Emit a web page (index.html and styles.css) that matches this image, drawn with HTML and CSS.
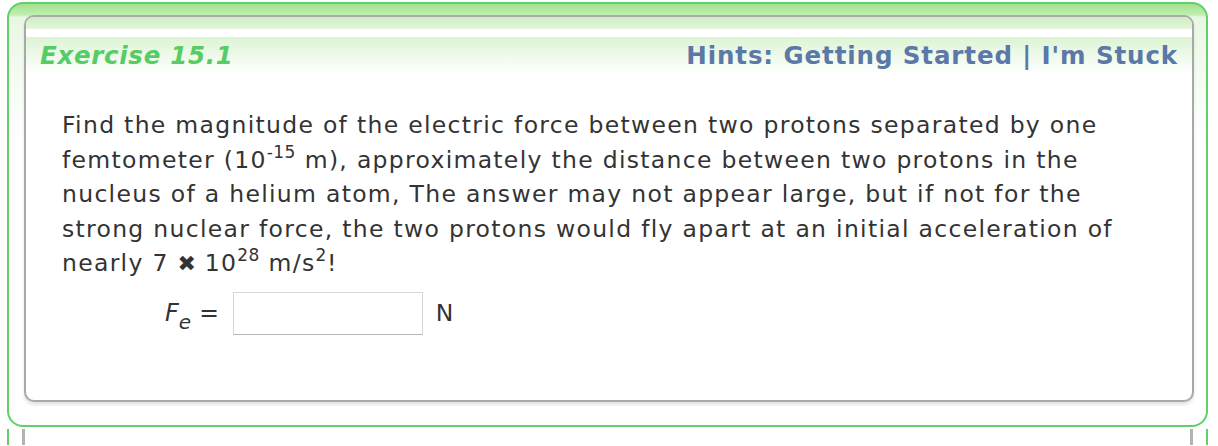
FILE: index.html
```html
<!DOCTYPE html>
<html>
<head>
<meta charset="utf-8">
<link rel="stylesheet" href="styles.css">
</head>
<body>
<div class="frame">
  <div class="box">
    <div class="topband"></div>
    <div class="gap"></div>
    <div class="header">
      <span class="title">Exercise 15.1</span>
      <span class="hints">Hints: Getting Started | I'm Stuck</span>
    </div>
    <div class="content">
      <p class="problem">Find the magnitude of the electric force between two protons separated by one femtometer (10<sup>-15</sup> m), approximately the distance between two protons in the nucleus of a helium atom, The answer may not appear large, but if not for the strong nuclear force, the two protons would fly apart at an initial acceleration of nearly 7 <span class="times">&#x2716;</span> 10<sup>28</sup> m/s<sup>2</sup>!</p>
      <div class="answer">
        <span class="var"><i>F</i><sub><i>e</i></sub></span>
        <span class="eq">=</span>
        <span class="input"></span>
        <span class="unit">N</span>
      </div>
    </div>
  </div>
</div>
<div class="next"><div class="next-inner"></div></div>
</body>
</html>
```
FILE: styles.css
```css
html, body {
  margin: 0;
  padding: 0;
  background: #ffffff;
}
body {
  width: 1218px;
  height: 446px;
  overflow: hidden;
  font-family: "DejaVu Sans", Verdana, sans-serif;
}
.frame {
  margin: 2px 10px 0 7px;
  height: 410px;
  border: 2px solid #5fd06a;
  border-radius: 16px;
  background: linear-gradient(to bottom, #a2e08f 0px, #c2eeb2 11px, #e8f7e2 13px, #f6fcf4 80px, #ffffff 140px);
  padding: 11px 12px 0 15px;
  box-sizing: content-box;
}
.box {
  height: 383px;
  border: 2px solid #a9a9a9;
  border-radius: 10px;
  background: #ffffff;
  box-shadow: 0 3px 3px rgba(0, 0, 0, 0.10);
  overflow: hidden;
}
.topband {
  height: 12px;
  background: linear-gradient(to bottom, #cdeec1, #e4f6dc);
}
.gap {
  height: 8px;
  background: #ffffff;
}
.header {
  height: 36px;
  display: flex;
  align-items: center;
  justify-content: space-between;
  padding: 0 14px 0 14px;
  background: linear-gradient(to bottom, #dcf4d3, #ffffff);
}
.title {
  color: #55cc64;
  font-weight: bold;
  font-style: italic;
  font-size: 24.5px;
  letter-spacing: 0.7px;
  padding-top: 1px;
}
.hints {
  color: #5b78a8;
  font-weight: bold;
  font-size: 24.5px;
  letter-spacing: 0.9px;
  padding-top: 1px;
}
.content {
  padding: 35px 36px 0 36px;
  color: #333333;
}
.problem {
  margin: 0;
  font-size: 23.5px;
  letter-spacing: 1.3px;
  line-height: 34.5px;
}
.problem sup {
  font-size: 17px;
  line-height: 0;
  vertical-align: 10px;
  letter-spacing: 0.5px;
}
.times {
  font-size: 22px;
  letter-spacing: 0;
}
.answer {
  display: flex;
  align-items: center;
  margin-top: 10px;
  padding-left: 103px;
  font-size: 23.5px;
  color: #333333;
}
.var {
  font-size: 24px;
}
.var sub {
  font-size: 20px;
  vertical-align: -8px;
  line-height: 0;
}
.eq {
  margin-left: 8px;
}
.input {
  width: 188px;
  height: 41px;
  margin-left: 14px;
  border: 1px solid #d6d6d6;
  border-bottom-color: #b5b5b5;
  background: #ffffff;
}
.unit {
  margin-left: 13px;
}
.next {
  margin: 2px 10px 0 7px;
  height: 16px;
  border-left: 2px solid #5fd06a;
  border-right: 2px solid #5fd06a;
  padding: 0 13px 0 13px;
}
.next-inner {
  height: 16px;
  border-left: 3px solid #b3b3b3;
  border-right: 3px solid #b3b3b3;
}
```
